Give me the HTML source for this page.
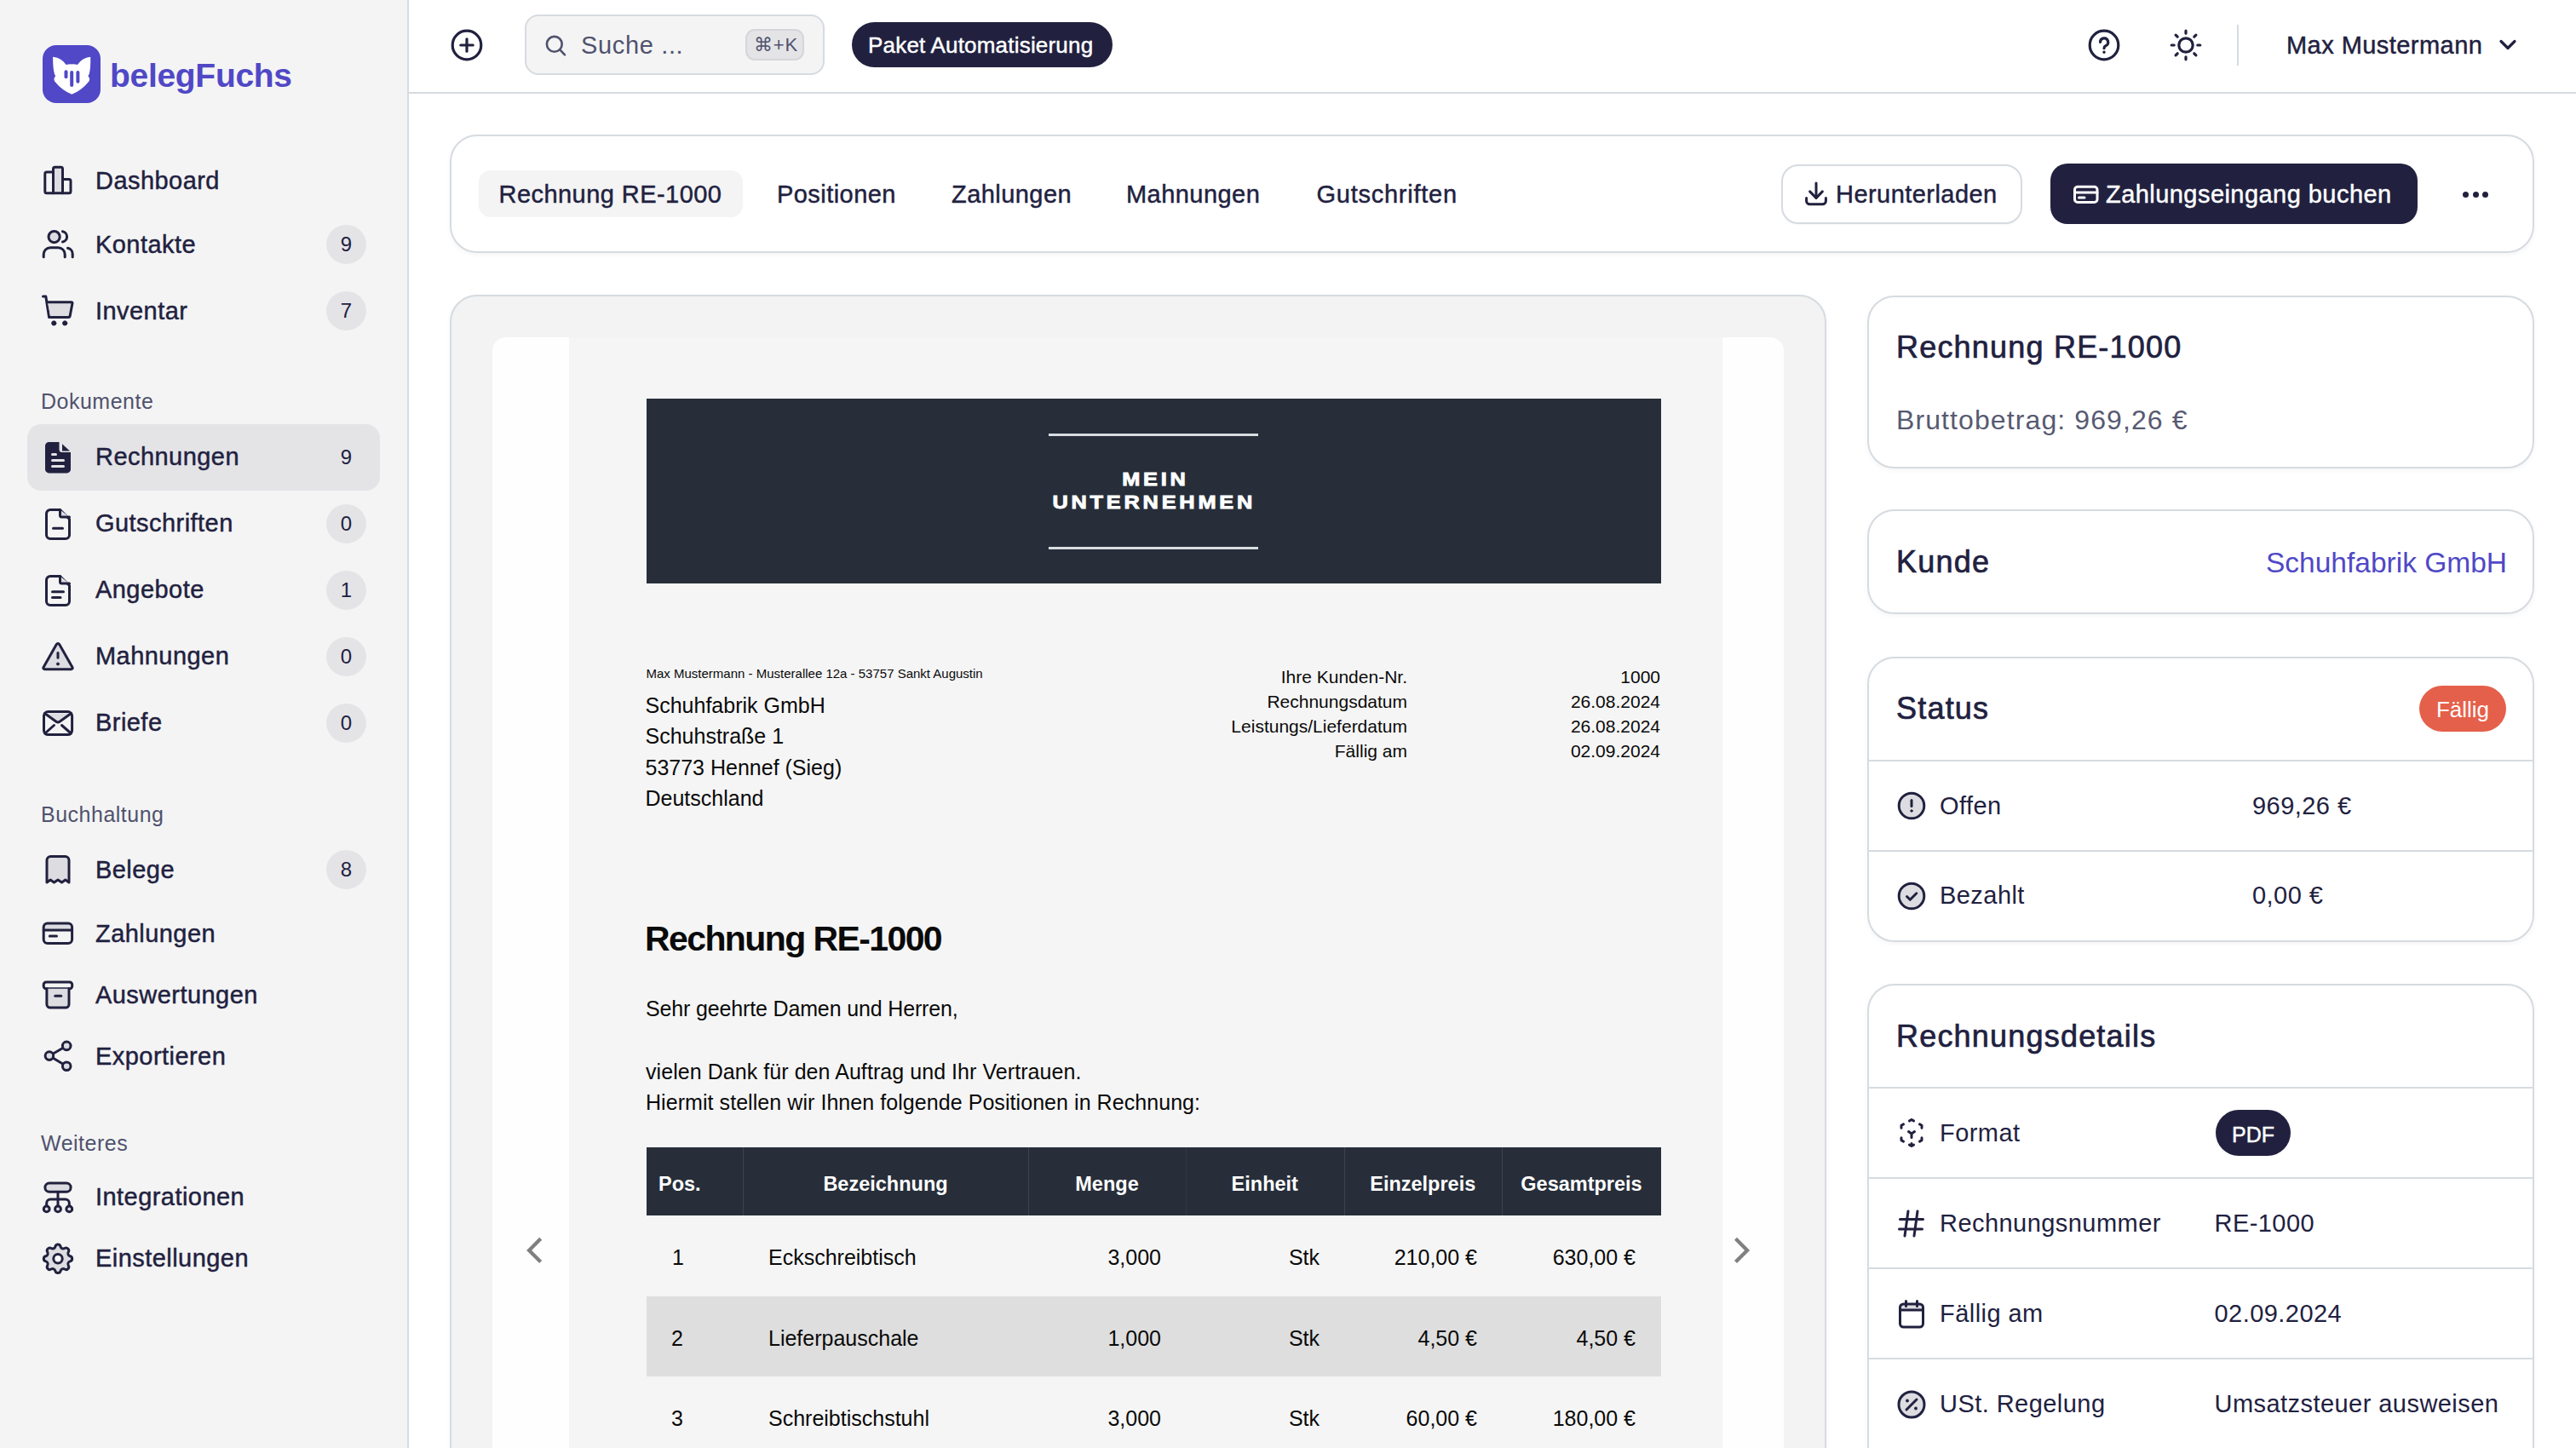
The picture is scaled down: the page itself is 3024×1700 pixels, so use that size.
<!DOCTYPE html>
<html><head><meta charset="utf-8">
<style>
*{box-sizing:border-box;margin:0;padding:0}
html,body{width:3024px;height:1700px;overflow:hidden;background:#fff}
body{position:relative;font-family:"Liberation Sans",sans-serif;color:#21213f;}
.a{position:absolute}
.t{position:absolute;line-height:1;white-space:pre}
.med{-webkit-text-stroke:0.45px currentColor}
.sb{position:absolute;left:0;top:0;width:478px;height:1700px;background:#f4f4f4;border-right:2px solid #d6dbe0;width:480px}
.nav{position:absolute;left:32px;width:414px;display:flex;align-items:center;border-radius:16px}
.nav svg{position:absolute;left:16px;top:50%;margin-top:-20px;width:40px;height:40px;fill:none;stroke:#21213f;stroke-width:3;stroke-linecap:round;stroke-linejoin:round;overflow:visible}
.nav .lb{position:absolute;left:80px;font-size:29px;letter-spacing:0.45px;line-height:1;top:50%;margin-top:-14.5px;white-space:pre}
.nav .bd{position:absolute;left:351px;width:47px;height:46px;top:50%;margin-top:-23px;border-radius:50%;background:#e4e4e7;font-size:24px;line-height:46px;text-align:center}
.sec{position:absolute;left:48px;font-size:25px;line-height:1;color:#50526e;white-space:pre;letter-spacing:0.5px}
.lf{fill:#dcdce1}
.hd{-webkit-text-stroke:0.7px currentColor;letter-spacing:1.2px}
.card{position:absolute;background:#fff;border:2px solid #d6dbe0;border-radius:32px;box-shadow:0 2px 6px rgba(0,0,0,0.045)}
</style></head><body>

<!-- SIDEBAR -->
<div class="sb">
  <div class="a" style="left:50px;top:53px;width:68px;height:68px;border-radius:16px;background:#5048c6">
    <svg width="68" height="68" viewBox="0 0 68 68" style="position:absolute;left:0;top:0">
      <path d="M34.3 22.4 Q37.5 22.2 40.9 23 Q46 15 56.2 13.7 Q56.6 27 54.6 34.2 L53.4 36.1 L55.2 39.2 Q55 42 54 43 Q46 53 34.3 57.8 Q22.6 53 14.6 43 Q13.6 42 13.4 39.2 L15.2 36.1 L14 34.2 Q12 27 12.1 13.7 Q22.6 15 27.7 23 Q31 22.2 34.3 22.4Z" fill="#fff"/>
      <g stroke="#5048c6" stroke-width="4" stroke-linecap="round">
        <line x1="27.5" y1="31.2" x2="27.5" y2="37.2"/>
        <line x1="34.2" y1="31.9" x2="34.2" y2="47.1"/>
        <line x1="41.4" y1="31.9" x2="41.4" y2="42.8"/>
      </g>
    </svg>
  </div>
  <div class="t" style="left:129px;top:68.5px;font-size:39px;font-weight:bold;color:#5048c6;letter-spacing:-0.3px">belegFuchs</div>

  <div class="nav" style="top:176.3px;height:72px">
    <svg viewBox="0 0 40 40"><path d="M4.8 12 a2 2 0 0 1 2 -2 h7.7 v24.8 h-7.7 a2 2 0 0 1 -2 -2z"/><path class="lf" d="M14.5 6.3 a2 2 0 0 1 2 -2 h7 a2 2 0 0 1 2 2 v28.5 h-11z"/><path d="M25.5 18.5 h7.5 a2 2 0 0 1 2 2 v12.3 a2 2 0 0 1 -2 2 h-7.5z"/></svg>
    <span class="lb med">Dashboard</span>
  </div>
  <div class="nav" style="top:248.3px;height:78px">
    <svg viewBox="0 0 40 40"><circle class="lf" cx="15.6" cy="11.1" r="6.6"/><path d="M3.2 34.7 v-3 a8 8 0 0 1 8 -8 h9 a8 8 0 0 1 8 8 v3"/><path d="M25.5 4.8 a6.2 6.2 0 0 1 0 12.2"/><path d="M31.5 24.3 a7 7 0 0 1 5.7 7 v3.4"/></svg>
    <span class="lb med">Kontakte</span><span class="bd">9</span>
  </div>
  <div class="nav" style="top:326.3px;height:78px">
    <svg viewBox="0 0 40 40"><path d="M2.5 3 h3.3 l3.8 24.5"/><path class="lf" d="M7.8 9.8 h28.2 a1 1 0 0 1 1 1.2 l-2.8 14.8 a2 2 0 0 1 -2 1.7 h-20.8"/><circle cx="15.3" cy="34.4" r="2.6" fill="#21213f" stroke-width="1"/><circle cx="28.2" cy="34.4" r="2.6" fill="#21213f" stroke-width="1"/></svg>
    <span class="lb med">Inventar</span><span class="bd">7</span>
  </div>

  <div class="sec" style="top:458.8px">Dokumente</div>

  <div class="nav" style="top:497.6px;height:78px;background:#e4e4e7">
    <svg viewBox="0 0 40 40" style="stroke:none"><path fill="#21213f" d="M5 6.5 a4.5 4.5 0 0 1 4.5 -4.5 h12 v8.5 a3.5 3.5 0 0 0 3.5 3.5 h10 v19.9 a4.5 4.5 0 0 1 -4.5 4.5 h-21 a4.5 4.5 0 0 1 -4.5 -4.5z"/><path fill="#21213f" d="M25 4.3 l9 8.2 h-9z"/><g stroke="#e4e4e7" stroke-width="3" stroke-linecap="round"><line x1="13.5" y1="16.6" x2="17.5" y2="16.6"/><line x1="13.5" y1="23.5" x2="26.5" y2="23.5"/><line x1="13.5" y1="30.4" x2="26.5" y2="30.4"/></g></svg>
    <span class="lb med">Rechnungen</span><span class="bd" style="background:transparent">9</span>
  </div>
  <div class="nav" style="top:575.6px;height:78px">
    <svg viewBox="0 0 40 40"><path d="M6.5 8 a4.5 4.5 0 0 1 4.5 -4.5 h11.5 l11 11 v18.5 a4.5 4.5 0 0 1 -4.5 4.5 h-18 a4.5 4.5 0 0 1 -4.5 -4.5z"/><path class="lf" d="M22.5 3.5 v6.5 a2 2 0 0 0 2 2 h9"/><line x1="14.5" y1="25.3" x2="25.5" y2="25.3"/></svg>
    <span class="lb med">Gutschriften</span><span class="bd">0</span>
  </div>
  <div class="nav" style="top:653.6px;height:78px">
    <svg viewBox="0 0 40 40"><path d="M6.5 8 a4.5 4.5 0 0 1 4.5 -4.5 h11.5 l11 11 v18.5 a4.5 4.5 0 0 1 -4.5 4.5 h-18 a4.5 4.5 0 0 1 -4.5 -4.5z"/><path class="lf" d="M22.5 3.5 v6.5 a2 2 0 0 0 2 2 h9"/><line x1="13.5" y1="21.7" x2="26.5" y2="21.7"/><line x1="13.5" y1="28.4" x2="23" y2="28.4"/></svg>
    <span class="lb med">Angebote</span><span class="bd">1</span>
  </div>
  <div class="nav" style="top:731.6px;height:78px">
    <svg viewBox="0 0 40 40"><path class="lf" d="M18.3 5.5 a2 2 0 0 1 3.4 0 l15.3 27 a1.6 1.6 0 0 1 -1.4 2.3 h-31.2 a1.6 1.6 0 0 1 -1.4 -2.3z"/><line x1="20" y1="15.5" x2="20" y2="21.2"/><circle cx="20" cy="28.5" r="1.6" fill="#21213f" stroke-width="0.8"/></svg>
    <span class="lb med">Mahnungen</span><span class="bd">0</span>
  </div>
  <div class="nav" style="top:809.6px;height:78px">
    <svg viewBox="0 0 40 40"><rect x="3.5" y="6.6" width="33.1" height="27" rx="5"/><path class="lf" d="M4.5 8.5 L18 18.3 a3.5 3.5 0 0 0 4 0 L35.5 8.5"/><path d="M4.8 32 L15.5 22.5 M35.3 32 L24.5 22.5"/></svg>
    <span class="lb med">Briefe</span><span class="bd">0</span>
  </div>

  <div class="sec" style="top:943.5px">Buchhaltung</div>

  <div class="nav" style="top:982px;height:78px">
    <svg viewBox="0 0 40 40"><path class="lf" d="M7 35 V9 a4.5 4.5 0 0 1 4.5 -4.5 h17 a4.5 4.5 0 0 1 4.5 4.5 V35 l-4.2 -3 l-4.3 3 l-4.5 -3 l-4.5 3 l-4.3 -3z"/></svg>
    <span class="lb med">Belege</span><span class="bd">8</span>
  </div>
  <div class="nav" style="top:1060px;height:72px">
    <svg viewBox="0 0 40 40"><path class="lf" d="M3.2 15.9 V12.6 a4.5 4.5 0 0 1 4.5 -4.5 h24.4 a4.5 4.5 0 0 1 4.5 4.5 V15.9z" stroke="none"/><rect x="3.2" y="8.1" width="33.4" height="23.4" rx="4.5"/><line x1="3.2" y1="15.9" x2="36.6" y2="15.9"/><line x1="10.3" y1="23" x2="18.5" y2="23"/></svg>
    <span class="lb med">Zahlungen</span>
  </div>
  <div class="nav" style="top:1132px;height:72px">
    <svg viewBox="0 0 40 40"><rect x="3.2" y="4.9" width="33.5" height="7.8" rx="3"/><path class="lf" d="M6.9 12.7 V31 a4 4 0 0 0 4 4 h18.1 a4 4 0 0 0 4 -4 V12.7"/><line x1="16.8" y1="21.3" x2="23.7" y2="21.3"/></svg>
    <span class="lb med">Auswertungen</span>
  </div>
  <div class="nav" style="top:1204px;height:72px">
    <svg viewBox="0 0 40 40"><line x1="14" y1="17.2" x2="26" y2="10.3"/><line x1="14" y1="22" x2="26" y2="29.3"/><circle class="lf" cx="9.9" cy="19.6" r="4.8"/><circle class="lf" cx="30.2" cy="7.9" r="4.8"/><circle class="lf" cx="30.2" cy="31.7" r="4.8"/></svg>
    <span class="lb med">Exportieren</span>
  </div>

  <div class="sec" style="top:1330px">Weiteres</div>

  <div class="nav" style="top:1369px;height:72px">
    <svg viewBox="0 0 40 40"><rect class="lf" x="4.9" y="4" width="30.2" height="10.2" rx="5"/><line x1="20" y1="14.2" x2="20" y2="31"/><path d="M6.7 31 v-3.5 a4.5 4.5 0 0 1 4.5 -4.5 h17.6 a4.5 4.5 0 0 1 4.5 4.5 v3.5"/><circle class="lf" cx="6.7" cy="34.4" r="3.4"/><circle class="lf" cx="20" cy="34.4" r="3.4"/><circle class="lf" cx="33.3" cy="34.4" r="3.4"/></svg>
    <span class="lb med">Integrationen</span>
  </div>
  <div class="nav" style="top:1441px;height:72px">
    <svg viewBox="0 0 40 40"><g transform="translate(20 20.8) scale(1.855) translate(-12 -12)" style="stroke-width:1.62"><path class="lf" d="M10.325 4.317c.426 -1.756 2.924 -1.756 3.35 0a1.724 1.724 0 0 0 2.573 1.066c1.543 -.94 3.31 .826 2.37 2.37a1.724 1.724 0 0 0 1.065 2.572c1.756 .426 1.756 2.924 0 3.35a1.724 1.724 0 0 0 -1.066 2.573c.94 1.543 -.826 3.31 -2.37 2.37a1.724 1.724 0 0 0 -2.572 1.065c-.426 1.756 -2.924 1.756 -3.35 0a1.724 1.724 0 0 0 -2.573 -1.066c-1.543 .94 -3.31 -.826 -2.37 -2.37a1.724 1.724 0 0 0 -1.065 -2.572c-1.756 -.426 -1.756 -2.924 0 -3.35a1.724 1.724 0 0 0 1.066 -2.573c-.94 -1.543 .826 -3.31 2.37 -2.37c1 .608 2.296 .07 2.572 -1.065z"/><circle cx="12" cy="12" r="2.8" fill="#fff"/></g></svg>
    <span class="lb med">Einstellungen</span>
  </div>
</div>

<!-- HEADER -->
<div class="a" style="left:480px;top:108px;width:2544px;height:2px;background:#d6dbe0"></div>
<svg class="a" style="left:522px;top:27px;overflow:visible" width="52" height="52" viewBox="0 0 52 52" fill="none" stroke="#21213f" stroke-width="3.2" stroke-linecap="round"><circle cx="26" cy="26" r="16.8"/><line x1="18.8" y1="26" x2="33.2" y2="26"/><line x1="26" y1="18.8" x2="26" y2="33.2"/></svg>
<div class="a" style="left:616px;top:17px;width:352px;height:71px;border:2px solid #d6dbe0;border-radius:16px;background:#f4f4f4"></div>
<svg class="a" style="left:630px;top:32px;overflow:visible" width="44" height="44" viewBox="0 0 44 44" fill="none" stroke="#50526e" stroke-width="2.6" stroke-linecap="round"><circle cx="20.8" cy="19.8" r="8.9"/><line x1="27.8" y1="26.8" x2="33" y2="32.3"/></svg>
<div class="t" style="left:682px;top:39.4px;font-size:29px;color:#50526e;letter-spacing:0.65px">Suche ...</div>
<div class="a" style="left:875px;top:34px;width:69px;height:37px;border:2px solid #d6d6da;border-radius:11px;background:#e4e4e7"></div>
<div class="t" style="left:885px;top:42px;font-size:22px;color:#50526e;letter-spacing:0.8px">⌘+K</div>
<div class="a" style="left:1000px;top:26px;width:306px;height:53px;border-radius:27px;background:#21213f"></div>
<div class="t med" style="left:1019px;top:40px;font-size:26px;color:#fff;letter-spacing:0.2px">Paket Automatisierung</div>

<svg class="a" style="left:2444px;top:27px;overflow:visible" width="52" height="52" viewBox="0 0 52 52" fill="none" stroke="#21213f" stroke-width="3.2" stroke-linecap="round"><circle cx="26" cy="26" r="16.8"/><path d="M21.5 22.5 a4.6 4.6 0 1 1 6.5 4.2 c-1.3 .7 -2 1.6 -2 3"/><circle cx="26" cy="34.2" r="1" fill="#21213f" stroke-width="1.5"/></svg>
<svg class="a" style="left:2540px;top:27px;overflow:visible" width="52" height="52" viewBox="0 0 52 52" fill="none" stroke="#21213f" stroke-width="3.2" stroke-linecap="round"><circle cx="26" cy="26" r="8.2"/><path d="M26 9.2 v3 M26 39.8 v3 M9.2 26 h3 M39.8 26 h3 M14.1 14.1 l2.1 2.1 M35.8 35.8 l2.1 2.1 M14.1 37.9 l2.1 -2.1 M35.8 16.2 l2.1 -2.1"/></svg>
<div class="a" style="left:2626px;top:29px;width:2px;height:48px;background:#d6dbe0"></div>
<div class="t med" style="left:2684px;top:38.9px;font-size:29px;letter-spacing:0.45px;color:#21213f">Max Mustermann</div>
<svg class="a" style="left:2930px;top:40px;overflow:visible" width="28" height="24" viewBox="0 0 28 24" fill="none" stroke="#21213f" stroke-width="3.2" stroke-linecap="round" stroke-linejoin="round"><path d="M6 8.5 l8 8 l8 -8"/></svg>

<!--MAIN-->
<!-- tab card -->
<div class="card" style="left:528px;top:158px;width:2447px;height:139px"></div>
<div class="a" style="left:562px;top:200px;width:310px;height:55px;border-radius:14px;background:#f4f4f4"></div>
<div class="t med" style="left:585.5px;top:214.1px;font-size:29px;letter-spacing:0.45px">Rechnung RE-1000</div>
<div class="t med" style="left:912px;top:214.1px;font-size:29px;letter-spacing:0.45px">Positionen</div>
<div class="t med" style="left:1117px;top:214.1px;font-size:29px;letter-spacing:0.45px">Zahlungen</div>
<div class="t med" style="left:1322px;top:214.1px;font-size:29px;letter-spacing:0.45px">Mahnungen</div>
<div class="t med" style="left:1545.5px;top:214.1px;font-size:29px;letter-spacing:0.75px">Gutschriften</div>

<div class="a" style="left:2091px;top:193px;width:283px;height:70px;border:2px solid #d6dbe0;border-radius:20px;background:#fff;box-shadow:0 1px 2px rgba(0,0,0,0.04)"></div>
<svg class="a" style="left:2113.5px;top:210px;overflow:visible" width="36" height="36" viewBox="0 0 24 24" fill="none" stroke="#21213f" stroke-width="2" stroke-linecap="round" stroke-linejoin="round"><path d="M4.4 15v2.3a2.6 2.6 0 0 0 2.6 2.6h10a2.6 2.6 0 0 0 2.6 -2.6v-2.3"/><path d="M7.1 9.9l4.9 5l4.9 -5"/><path d="M12 3.4v11.4"/></svg>
<div class="t med" style="left:2155px;top:214.2px;font-size:29px;letter-spacing:0.45px">Herunterladen</div>
<div class="a" style="left:2407px;top:192px;width:431px;height:71px;border-radius:20px;background:#21213f"></div>
<svg class="a" style="left:2430px;top:208px;overflow:visible" width="40" height="40" viewBox="0 0 40 40" fill="none" stroke="#fff" stroke-width="3" stroke-linecap="round" stroke-linejoin="round"><rect x="5.5" y="11.2" width="26.5" height="18.3" rx="3.5"/><line x1="5.5" y1="18" x2="32" y2="18"/><line x1="10.5" y1="24" x2="17" y2="24"/></svg>
<div class="t med" style="left:2472px;top:214.2px;font-size:29px;letter-spacing:0.45px;color:#fff">Zahlungseingang buchen</div>
<div class="a" style="left:2891px;top:224.5px;width:7px;height:7px;border-radius:50%;background:#21213f"></div>
<div class="a" style="left:2902.5px;top:224.5px;width:7px;height:7px;border-radius:50%;background:#21213f"></div>
<div class="a" style="left:2914px;top:224.5px;width:7px;height:7px;border-radius:50%;background:#21213f"></div>

<!-- pdf card -->
<div class="card" style="left:528px;top:346px;width:1616px;height:1500px;background:#f3f3f3"></div>
<div class="a" style="left:578px;top:396px;width:1516px;height:1400px;background:#fefefe;border-radius:16px 16px 0 0"></div>
<div class="a" style="left:668px;top:396px;width:1354px;height:1400px;background:#f5f5f5"></div>
<svg class="a" style="left:600px;top:1440px;overflow:visible" width="60" height="60" viewBox="600 1440 60 60" fill="none" stroke="#808080" stroke-width="4.3" stroke-linecap="butt" stroke-linejoin="miter"><path d="M634.7 1454.2 L621.1 1467.9 L634.7 1481.6"/></svg>
<svg class="a" style="left:2020px;top:1440px;overflow:visible" width="60" height="60" viewBox="2020 1440 60 60" fill="none" stroke="#808080" stroke-width="4.3" stroke-linecap="butt" stroke-linejoin="miter"><path d="M2037.5 1454.2 L2051.1 1467.9 L2037.5 1481.6"/></svg>

<div class="a" style="left:758.5px;top:468px;width:1191.5px;height:216.5px;background:#272e3a"></div>
<div class="a" style="left:1231px;top:509px;width:246px;height:2.5px;background:#d9dce0"></div>
<div class="a" style="left:1231px;top:642px;width:246px;height:2.5px;background:#d9dce0"></div>
<div class="t" style="left:758.5px;width:1191.5px;text-align:center;top:549px;font-size:22px;font-weight:bold;color:#fff;letter-spacing:3.3px;line-height:27px;transform:scaleX(1.15);-webkit-text-stroke:0.9px #fff;text-indent:3px">MEIN<br>UNTERNEHMEN</div>

<div class="pdf" style="color:#0a0a0a">
<div class="t" style="left:758.5px;top:783.2px;font-size:15px">Max Mustermann - Musterallee 12a - 53757 Sankt Augustin</div>
<div class="t" style="left:757.5px;top:809.6px;font-size:25px;line-height:36.5px">Schuhfabrik GmbH<br>Schuhstraße 1<br>53773 Hennef (Sieg)<br>Deutschland</div>
<div class="t" style="left:1352px;width:300px;text-align:right;top:779.8px;font-size:21px;line-height:29.2px">Ihre Kunden-Nr.<br>Rechnungsdatum<br>Leistungs/Lieferdatum<br>Fällig am</div>
<div class="t" style="left:1649px;width:300px;text-align:right;top:779.8px;font-size:21px;line-height:29.2px">1000<br>26.08.2024<br>26.08.2024<br>02.09.2024</div>

<div class="t" style="left:757px;top:1081.6px;font-size:41px;font-weight:bold;letter-spacing:-1.6px">Rechnung RE-1000</div>
<div class="t" style="left:758px;top:1172px;font-size:25px;letter-spacing:-0.15px">Sehr geehrte Damen und Herren,</div>
<div class="t" style="left:758px;top:1240.2px;font-size:25px;line-height:36.2px;letter-spacing:0.06px">vielen Dank für den Auftrag und Ihr Vertrauen.<br>Hiermit stellen wir Ihnen folgende Positionen in Rechnung:</div>
</div>

<div class="a" style="left:758.5px;top:1346.7px;width:1191.5px;height:80px;background:#272e3a"></div>
<div class="a" style="left:758.5px;top:1521.9px;width:1191.5px;height:94px;background:#dedede"></div>
<div class="a" style="left:872px;top:1346.7px;width:1px;height:80px;background:#3d4450"></div>
<div class="a" style="left:1207px;top:1346.7px;width:1px;height:80px;background:#3d4450"></div>
<div class="a" style="left:1392px;top:1346.7px;width:1px;height:80px;background:#2f3642"></div>
<div class="a" style="left:1577.5px;top:1346.7px;width:1px;height:80px;background:#3d4450"></div>
<div class="a" style="left:1763px;top:1346.7px;width:1px;height:80px;background:#3d4450"></div>
<div class="tb" style="color:#fff;font-weight:bold;font-size:23.5px">
<div class="t" style="left:773px;top:1378.8px">Pos.</div>
<div class="t" style="left:872px;width:335px;text-align:center;top:1378.8px">Bezeichnung</div>
<div class="t" style="left:1207px;width:185px;text-align:center;top:1378.8px">Menge</div>
<div class="t" style="left:1392px;width:185.5px;text-align:center;top:1378.8px">Einheit</div>
<div class="t" style="left:1577.5px;width:185.5px;text-align:center;top:1378.8px">Einzelpreis</div>
<div class="t" style="left:1763px;width:187px;text-align:center;top:1378.8px">Gesamtpreis</div>
</div>
<div class="tr" style="color:#0a0a0a;font-size:25px">
<div class="t" style="left:789px;top:1464.2px">1</div>
<div class="t" style="left:902px;top:1464.2px">Eckschreibtisch</div>
<div class="t" style="left:1063px;width:300px;text-align:right;top:1464.2px">3,000</div>
<div class="t" style="left:1249px;width:300px;text-align:right;top:1464.2px">Stk</div>
<div class="t" style="left:1434px;width:300px;text-align:right;top:1464.2px">210,00 €</div>
<div class="t" style="left:1620px;width:300px;text-align:right;top:1464.2px">630,00 €</div>
<div class="t" style="left:788px;top:1558.8px">2</div>
<div class="t" style="left:902px;top:1558.8px">Lieferpauschale</div>
<div class="t" style="left:1063px;width:300px;text-align:right;top:1558.8px">1,000</div>
<div class="t" style="left:1249px;width:300px;text-align:right;top:1558.8px">Stk</div>
<div class="t" style="left:1434px;width:300px;text-align:right;top:1558.8px">4,50 €</div>
<div class="t" style="left:1620px;width:300px;text-align:right;top:1558.8px">4,50 €</div>
<div class="t" style="left:788px;top:1652.5px">3</div>
<div class="t" style="left:902px;top:1652.5px">Schreibtischstuhl</div>
<div class="t" style="left:1063px;width:300px;text-align:right;top:1652.5px">3,000</div>
<div class="t" style="left:1249px;width:300px;text-align:right;top:1652.5px">Stk</div>
<div class="t" style="left:1434px;width:300px;text-align:right;top:1652.5px">60,00 €</div>
<div class="t" style="left:1620px;width:300px;text-align:right;top:1652.5px">180,00 €</div>
</div>

<!-- right cards -->
<div class="card" style="left:2192px;top:347px;width:783px;height:203px"></div>
<div class="t hd" style="left:2226px;top:389.6px;font-size:36px">Rechnung RE-1000</div>
<div class="t" style="left:2226px;top:476.8px;font-size:32px;letter-spacing:1.1px;color:#575a72">Bruttobetrag: 969,26 €</div>

<div class="card" style="left:2192px;top:598px;width:783px;height:123px"></div>
<div class="t hd" style="left:2226px;top:642px;font-size:36px">Kunde</div>
<div class="t" style="left:2440px;width:503px;text-align:right;top:644.1px;font-size:33.5px;color:#5048c6">Schuhfabrik GmbH</div>

<div class="card" style="left:2192px;top:770.5px;width:783px;height:335px"></div>
<div class="t hd" style="left:2226px;top:814px;font-size:36px">Status</div>
<div class="a" style="left:2840px;top:805px;width:102px;height:54px;border-radius:27px;background:#e5604a"></div>
<div class="t" style="left:2840px;width:102px;text-align:center;top:819.5px;font-size:26px;color:#fff">Fällig</div>
<div class="a" style="left:2194px;top:892px;width:779px;height:2px;background:#d6dbe0"></div>
<div class="a" style="left:2194px;top:998px;width:779px;height:2px;background:#d6dbe0"></div>
<svg class="a" style="left:2224px;top:926px;overflow:visible" width="40" height="40" viewBox="0 0 40 40" fill="none" stroke="#21213f" stroke-width="3" stroke-linecap="round"><circle class="lf" cx="20" cy="20" r="14.8"/><line x1="20" y1="13.5" x2="20" y2="20.5"/><circle cx="20" cy="26" r="1.2" fill="#21213f" stroke-width="1"/></svg>
<div class="t" style="left:2277px;top:932.1px;font-size:29px;letter-spacing:0.45px">Offen</div>
<div class="t" style="left:2644px;top:932.1px;font-size:29px;letter-spacing:0.45px">969,26 €</div>
<svg class="a" style="left:2224px;top:1031.6px;overflow:visible" width="40" height="40" viewBox="0 0 40 40" fill="none" stroke="#21213f" stroke-width="3" stroke-linecap="round" stroke-linejoin="round"><circle class="lf" cx="20" cy="20" r="14.8"/><path d="M14.5 20.5 l3.8 3.8 l7.5 -7.5"/></svg>
<div class="t" style="left:2277px;top:1036.9px;font-size:29px;letter-spacing:0.45px">Bezahlt</div>
<div class="t" style="left:2644px;top:1036.9px;font-size:29px;letter-spacing:0.45px">0,00 €</div>

<div class="card" style="left:2192px;top:1155px;width:783px;height:700px"></div>
<div class="t hd" style="left:2226px;top:1199.2px;font-size:36px">Rechnungsdetails</div>
<div class="a" style="left:2194px;top:1275.5px;width:779px;height:2px;background:#d6dbe0"></div>
<div class="a" style="left:2194px;top:1382px;width:779px;height:2px;background:#d6dbe0"></div>
<div class="a" style="left:2194px;top:1488px;width:779px;height:2px;background:#d6dbe0"></div>
<div class="a" style="left:2194px;top:1594px;width:779px;height:2px;background:#d6dbe0"></div>
<div class="a" style="left:2194px;top:1700px;width:779px;height:2px;background:#d6dbe0"></div>

<svg class="a" style="left:2224px;top:1310.3px;overflow:visible" width="40" height="40" viewBox="0 0 40 40" fill="none" stroke="#21213f" stroke-width="3" stroke-linecap="round" stroke-linejoin="round"><path d="M20 4.5 l2.5 1.4 M20 4.5 l-2.5 1.4 M8 11.3 v3 M8 11.3 l2.5 -1.4 M32 11.3 v3 M32 11.3 l-2.5 -1.4 M8 25.7 v3 l2.5 1.4 M32 25.7 v3 l-2.5 1.4 M17.5 34.1 l2.5 1.4 l2.5 -1.4 M20 35.5 v-3 M20 21 l3.5 -2.5 M20 21 l-3.5 -2.5 M20 21 v4.5"/></svg>
<div class="t" style="left:2277px;top:1315.9px;font-size:29px;letter-spacing:0.45px">Format</div>
<div class="a" style="left:2601px;top:1303px;width:88px;height:54px;border-radius:27px;background:#21213f"></div>
<div class="t med" style="left:2601px;width:88px;text-align:center;top:1320px;font-size:25px;color:#fff">PDF</div>

<svg class="a" style="left:2224px;top:1416.5px;overflow:visible" width="40" height="40" viewBox="0 0 40 40" fill="none" stroke="#21213f" stroke-width="3" stroke-linecap="round"><path d="M6.5 14.5 h27 M5.5 26 h27 M16 5 l-4 29 M27 5 l-4 29"/></svg>
<div class="t" style="left:2277px;top:1422.2px;font-size:29px;letter-spacing:0.45px">Rechnungsnummer</div>
<div class="t" style="left:2599.5px;top:1422.2px;font-size:29px;letter-spacing:0.45px">RE-1000</div>

<svg class="a" style="left:2224px;top:1523px;overflow:visible" width="40" height="40" viewBox="0 0 40 40" fill="none" stroke="#21213f" stroke-width="3" stroke-linecap="round" stroke-linejoin="round"><path class="lf" d="M6.5 15 v-3 a4 4 0 0 1 4 -4 h19 a4 4 0 0 1 4 4 v3z" stroke="none"/><path d="M6.5 15 h27 M13.5 4.5 v6 M26.5 4.5 v6"/><rect x="6.5" y="8" width="27" height="27" rx="4"/></svg>
<div class="t" style="left:2277px;top:1528.2px;font-size:29px;letter-spacing:0.45px">Fällig am</div>
<div class="t" style="left:2599.5px;top:1528.2px;font-size:29px;letter-spacing:0.45px">02.09.2024</div>

<svg class="a" style="left:2224px;top:1629px;overflow:visible" width="40" height="40" viewBox="0 0 40 40" fill="none" stroke="#21213f" stroke-width="3" stroke-linecap="round"><circle class="lf" cx="20" cy="20" r="15"/><line x1="14" y1="26" x2="26" y2="14"/><circle cx="15" cy="15.5" r="1.3" fill="#21213f" stroke-width="1.2"/><circle cx="25" cy="24.5" r="1.3" fill="#21213f" stroke-width="1.2"/></svg>
<div class="t" style="left:2277px;top:1633.8px;font-size:29px;letter-spacing:0.45px">USt. Regelung</div>
<div class="t" style="left:2599.5px;top:1633.8px;font-size:29px;letter-spacing:0.45px">Umsatzsteuer ausweisen</div>
</body></html>
